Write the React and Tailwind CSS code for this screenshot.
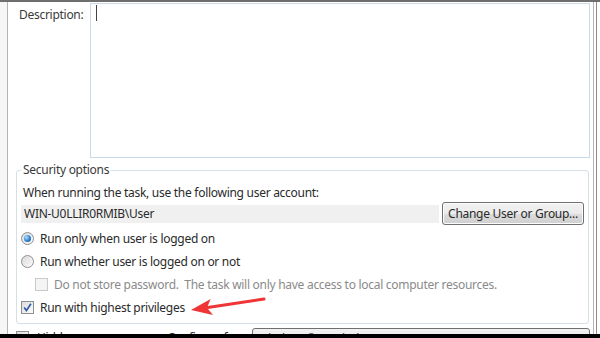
import React from "react";

const Radio = ({ checked }) => (
  <span className="w-[13px] h-[13px] rounded-full border border-[#8f8f8f] bg-[linear-gradient(135deg,#d9d9d9,#fcfcfc)] flex items-center justify-center shrink-0">
    {checked && (
      <span className="w-[7px] h-[7px] rounded-full bg-[radial-gradient(circle_at_35%_35%,#b4e2ff,#2a80d2_55%,#0c4a8c)]" />
    )}
  </span>
);

const Check = ({ checked, disabled }) => (
  <span
    className={
      disabled
        ? "w-[13px] h-[13px] border border-[#cacaca] bg-[#f4f4f4] shrink-0"
        : "w-[13px] h-[13px] border border-[#8f8f8f] bg-[linear-gradient(135deg,#dcdcdc,#fcfcfc)] flex items-center justify-center shrink-0"
    }
  >
    {checked && (
      <svg width="11" height="11" viewBox="0 0 11 11">
        <path d="M2.2 5.6 L4.4 8.6 L8.9 1.8" fill="none" stroke="#2f57a4" strokeWidth="1.7" />
      </svg>
    )}
  </span>
);

export default function App() {
  return (
    <div className="relative w-[600px] h-[338px] overflow-hidden bg-white border-t-2 border-b-4 border-t-[#6e6e6e] border-b-black font-['Noto_Sans',sans-serif] text-[12px] leading-[16px] tracking-[-0.28px] text-[#2a2a2a]">
      <div className="flex h-full">
        <div className="w-[7px] shrink-0 bg-[#f6f6f6]" />
        <div className="flex-1 min-w-0 border-l border-r border-[#b4b4b4]">
          {/* description */}
          <div className="flex pt-[1px] pr-[3px]">
            <div className="w-[82px] shrink-0 pl-[11px] pt-[4px] text-[#3a3a3a]">Description:</div>
            <div className="flex-1 h-[155px] border border-[#c9dbea]">
              <div className="ml-[5px] mt-[1px] w-px h-[16px] bg-[#444]" />
            </div>
          </div>

          {/* security options */}
          <fieldset className="mt-[4px] ml-[8px] mr-[4px] pl-[4px] pr-[4px] pb-[4px] border border-[#d5dfe5] rounded-[3px]">
            <legend className="px-[2px] text-[#3a3a3a]">Security options</legend>
            <div className="pt-[7px] pl-[2px]">When running the task, use the following user account:</div>
            <div className="mt-[1px] h-[23px] flex items-center gap-[3px]">
              <div className="flex-1 h-[18px] bg-[#f0f0f0] pl-[3px] leading-[18px]">WIN-U0LLIR0RMIB\User</div>
              <button className="w-[142px] h-[23px] border border-[#707070] rounded-[3px] bg-[linear-gradient(#f2f2f2_0%,#ebebeb_50%,#dddddd_50%,#cfcfcf_100%)] shadow-[inset_0_0_0_1px_#fcfcfc] text-[#2a2a2a]">
                Change User or Group...
              </button>
            </div>
            <div className="mt-[2px] h-[23px] flex items-center gap-[6px]">
              <Radio checked />
              <span>Run only when user is logged on</span>
            </div>
            <div className="h-[23px] flex items-center gap-[6px]">
              <Radio />
              <span>Run whether user is logged on or not</span>
            </div>
            <div className="h-[23px] flex items-center gap-[6px] pl-[14px]">
              <Check disabled />
              <span className="text-[#8a8a8a]">Do not store password.&nbsp; The task will only have access to local computer resources.</span>
            </div>
            <div className="h-[23px] flex items-center gap-[6px]">
              <Check checked />
              <span>Run with highest privileges</span>
            </div>
          </fieldset>

          {/* bottom row, cut off by the frame */}
          <div className="mt-[4px] flex items-start pr-[3px]">
            <div className="ml-[8px] mt-[3px]">
              <Check />
            </div>
            <span className="ml-[8px] mt-[2px]">Hidden</span>
            <span className="ml-auto mr-[10px] mt-[2px]">Configure for:</span>
            <div className="w-[338px] h-[22px] border border-[#707070] rounded-[3px] bg-[linear-gradient(#f2f2f2_0%,#ebebeb_50%,#dddddd_50%,#cfcfcf_100%)] pl-[4px] pt-[2px] flex">
              <span className="flex-1">Windows® 7, Windows Server™ 2008 R2</span>
              <span className="pr-[6px] text-[9px]">▼</span>
            </div>
          </div>
        </div>
        <div className="w-[2px] shrink-0" />
        <div className="w-px shrink-0 bg-[#8a8a8a]" />
        <div className="w-[3px] shrink-0" />
      </div>

      {/* red annotation arrow */}
      <svg className="absolute left-0 top-[-2px] pointer-events-none" width="600" height="338">
        <line x1="264" y1="299" x2="206" y2="307.7" stroke="#ef3535" strokeWidth="3" strokeLinecap="round" />
        <polygon points="191,310 213,315 207,307.7 210.6,299" fill="#ef3535" />
      </svg>
    </div>
  );
}
